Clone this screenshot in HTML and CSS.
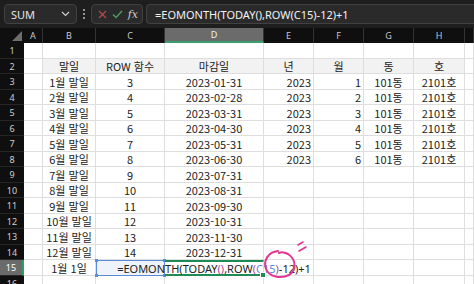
FILE: index.html
```html
<!DOCTYPE html>
<html lang="ko">
  <head>
    <meta charset="UTF-8" />
    <meta name="viewport" content="width=device-width, initial-scale=1.0" />
    <title>EOMONTH</title>
    <link rel="stylesheet" href="styles.css">
  </head>
  <body>
    <!-- Formula bar -->
    <div class="toolbar">
      <div class="namebox">
        <span>SUM</span>
        <svg width="9" height="6" viewBox="0 0 9 6"><polyline points="1,1 4.5,4.5 8,1" fill="none" stroke="#cfcfcf" stroke-width="1.2"/></svg>
      </div>
      <svg class="dots" width="4" height="12" viewBox="0 0 4 12"><circle cx="2" cy="2" r="1" fill="#bbb"/><circle cx="2" cy="6" r="1" fill="#bbb"/><circle cx="2" cy="10" r="1" fill="#bbb"/></svg>
      <div class="fnbox">
        <svg width="9" height="9" viewBox="0 0 9 9"><path d="M1 1 L8 8 M8 1 L1 8" stroke="#b24a4a" stroke-width="1.3"/></svg>
        <svg width="11" height="9" viewBox="0 0 11 9"><polyline points="1,4.5 4,7.5 10,1" fill="none" stroke="#4f9e63" stroke-width="1.4"/></svg>
        <span class="fx">fx</span>
      </div>
      <div class="formula">=EOMONTH(TODAY(),ROW(C15)-12)+1</div>
    </div>

    <!-- Sheet grid -->
    <div class="sheet">
      <div class="row head">
        <div class="rh corner"><span class="tri"></span></div>
        <div class="ch">A</div><div class="ch">B</div><div class="ch">C</div><div class="ch sel">D</div><div class="ch">E</div><div class="ch">F</div><div class="ch">G</div><div class="ch">H</div><div class="ch"></div>
      </div>
      <div class="row tall">
        <div class="rh">1</div>
        <div class="c"></div><div class="c"></div><div class="c"></div><div class="c"></div><div class="c"></div><div class="c"></div><div class="c"></div><div class="c"></div><div class="c"></div>
      </div>
      <div class="row">
        <div class="rh">2</div>
        <div class="c"></div><div class="c hd">말일</div><div class="c hd">ROW 함수</div><div class="c hd">마감일</div><div class="c hd">년</div><div class="c hd">월</div><div class="c hd">동</div><div class="c hd">호</div><div class="c"></div>
      </div>
      <div class="row tall">
        <div class="rh">3</div>
        <div class="c"></div><div class="c m">1월 말일</div><div class="c m">3</div><div class="c m">2023-01-31</div><div class="c r">2023</div><div class="c r">1</div><div class="c m">101동</div><div class="c m">2101호</div><div class="c"></div>
      </div>
      <div class="row">
        <div class="rh">4</div>
        <div class="c"></div><div class="c m">2월 말일</div><div class="c m">4</div><div class="c m">2023-02-28</div><div class="c r">2023</div><div class="c r">2</div><div class="c m">101동</div><div class="c m">2101호</div><div class="c"></div>
      </div>
      <div class="row tall">
        <div class="rh">5</div>
        <div class="c"></div><div class="c m">3월 말일</div><div class="c m">5</div><div class="c m">2023-03-31</div><div class="c r">2023</div><div class="c r">3</div><div class="c m">101동</div><div class="c m">2101호</div><div class="c"></div>
      </div>
      <div class="row">
        <div class="rh">6</div>
        <div class="c"></div><div class="c m">4월 말일</div><div class="c m">6</div><div class="c m">2023-04-30</div><div class="c r">2023</div><div class="c r">4</div><div class="c m">101동</div><div class="c m">2101호</div><div class="c"></div>
      </div>
      <div class="row tall">
        <div class="rh">7</div>
        <div class="c"></div><div class="c m">5월 말일</div><div class="c m">7</div><div class="c m">2023-05-31</div><div class="c r">2023</div><div class="c r">5</div><div class="c m">101동</div><div class="c m">2101호</div><div class="c"></div>
      </div>
      <div class="row">
        <div class="rh">8</div>
        <div class="c"></div><div class="c m">6월 말일</div><div class="c m">8</div><div class="c m">2023-06-30</div><div class="c r">2023</div><div class="c r">6</div><div class="c m">101동</div><div class="c m">2101호</div><div class="c"></div>
      </div>
      <div class="row tall">
        <div class="rh">9</div>
        <div class="c"></div><div class="c m">7월 말일</div><div class="c m">9</div><div class="c m">2023-07-31</div><div class="c"></div><div class="c"></div><div class="c"></div><div class="c"></div><div class="c"></div>
      </div>
      <div class="row">
        <div class="rh">10</div>
        <div class="c"></div><div class="c m">8월 말일</div><div class="c m">10</div><div class="c m">2023-08-31</div><div class="c"></div><div class="c"></div><div class="c"></div><div class="c"></div><div class="c"></div>
      </div>
      <div class="row tall">
        <div class="rh">11</div>
        <div class="c"></div><div class="c m">9월 말일</div><div class="c m">11</div><div class="c m">2023-09-30</div><div class="c"></div><div class="c"></div><div class="c"></div><div class="c"></div><div class="c"></div>
      </div>
      <div class="row">
        <div class="rh">12</div>
        <div class="c"></div><div class="c m">10월 말일</div><div class="c m">12</div><div class="c m">2023-10-31</div><div class="c"></div><div class="c"></div><div class="c"></div><div class="c"></div><div class="c"></div>
      </div>
      <div class="row tall">
        <div class="rh">13</div>
        <div class="c"></div><div class="c m">11월 말일</div><div class="c m">13</div><div class="c m">2023-11-30</div><div class="c"></div><div class="c"></div><div class="c"></div><div class="c"></div><div class="c"></div>
      </div>
      <div class="row">
        <div class="rh">14</div>
        <div class="c"></div><div class="c m">12월 말일</div><div class="c m">14</div><div class="c m">2023-12-31</div><div class="c"></div><div class="c"></div><div class="c"></div><div class="c"></div><div class="c"></div>
      </div>
      <div class="row tall">
        <div class="rh sel">15</div>
        <div class="c"></div><div class="c m">1월 1일</div>
        <div class="c ref"><i class="h tl"></i><i class="h tr"></i><i class="h bl"></i><i class="h br"></i></div>
        <div class="c active">
          <span class="edit">=EOMONTH(TODAY<span class="pk">()</span>,ROW<span class="pk">(</span><span class="bl">C15</span><span class="pk">)</span>-12)+1</span>
          <i class="fill"></i>
        </div>
        <div class="c"></div><div class="c"></div><div class="c"></div><div class="c"></div><div class="c"></div>
      </div>
      <div class="row tall">
        <div class="rh">16</div>
        <div class="c"></div><div class="c"></div><div class="c"></div><div class="c"></div><div class="c"></div><div class="c"></div><div class="c"></div><div class="c"></div><div class="c"></div>
      </div>

      <!-- hand drawn marker -->
      <svg class="mark" width="60" height="45" viewBox="0 0 60 45">
        <path d="M24 12 C14 13 9 22 12 30 C15 38 27 40 35 36 C43 31 42 20 34 15 C30 13 27 13 25 14" fill="none" stroke="#e2358f" stroke-width="2" stroke-linecap="round"/>
        <path d="M44 6 L49 3 M45 12 L52 8" fill="none" stroke="#e2358f" stroke-width="1.6" stroke-linecap="round"/>
      </svg>
    </div>
  </body>
</html>
```

FILE: styles.css
```css
/* Excel sheet, dark UI */
body {
  margin: 0;
  width: 474px;
  height: 284px;
  overflow: hidden;
  background-color: #1e1e1e;
  font-family: "Noto Sans CJK KR", "Noto Sans", sans-serif;
}

/* Formula bar */
.toolbar {
  height: 28px;
  box-sizing: border-box;
  padding: 4px 0 4px 4px;
  display: flex;
  align-items: stretch;
  background-color: #1e1e1e;
}

.namebox {
  width: 73px;
  box-sizing: border-box;
  padding: 0 6px 0 6px;
  display: flex;
  align-items: center;
  justify-content: space-between;
  border: 1px solid #414141;
  border-radius: 4px;
  background-color: #2a2a2a;
  color: #e6e6e6;
  font-family: "Noto Sans", sans-serif;
  font-size: 11px;
}

.dots {
  align-self: center;
  margin: 0 5px 0 5px;
}

.fnbox {
  width: 52px;
  box-sizing: border-box;
  padding: 0 4px 0 6px;
  display: flex;
  align-items: center;
  justify-content: space-between;
  border: 1px solid #414141;
  border-radius: 4px;
  background-color: #2a2a2a;
}

.fx {
  color: #cfcfcf;
  font-family: "DejaVu Serif", serif;
  font-style: italic;
  font-size: 11px;
}

.formula {
  flex: 1;
  margin-left: 3px;
  padding-left: 8px;
  display: flex;
  align-items: center;
  border: 1px solid #414141;
  border-right: none;
  border-radius: 4px 0 0 4px;
  background-color: #2a2a2a;
  color: #f2f2f2;
  font-family: "Noto Sans", sans-serif;
  font-size: 11px;
  white-space: nowrap;
}

/* Sheet */
.sheet {
  position: relative;
  background-color: #fff;
}

.row {
  display: grid;
  grid-template-columns: 24px 19px 53px 69px 99px 50px 50px 50px 51px 1fr;
  height: 15px;
}

.row.tall {
  height: 16px;
}

.row.head {
  height: 15px;
  background-color: #0f0f0f;
}

.rh {
  display: flex;
  align-items: center;
  justify-content: center;
  background-color: #0f0f0f;
  border-bottom: 1px solid #262626;
  color: #cfcfcf;
  font-family: "Noto Sans", sans-serif;
  font-size: 9px;
  box-sizing: border-box;
}

.rh.sel {
  background-color: #6b6b6b;
  border-right: 2px solid #2f9e63;
  color: #fff;
}

.corner {
  position: relative;
  border-bottom: none;
}

.tri {
  position: absolute;
  right: 2px;
  bottom: 2px;
  width: 0;
  height: 0;
  border-left: 10px solid transparent;
  border-bottom: 10px solid #6d6d6d;
}

.ch {
  display: flex;
  align-items: center;
  justify-content: center;
  box-sizing: border-box;
  border-right: 1px solid #333;
  color: #c9c9c9;
  font-family: "Noto Sans", sans-serif;
  font-size: 9px;
}

.ch.sel {
  background-color: #6b6b6b;
  border-bottom: 2px solid #3a9f6e;
  color: #f0f0f0;
}

.c {
  box-sizing: border-box;
  padding: 0 2px;
  display: flex;
  align-items: center;
  border-right: 1px solid #dedede;
  border-bottom: 1px solid #dedede;
  color: #222;
  font-size: 11px;
  white-space: nowrap;
  overflow: hidden;
}

.c.m,
.c.hd {
  justify-content: center;
}

.c.hd {
  background-color: #f2f2f2;
}

.c.r {
  justify-content: flex-end;
}

/* C15 reference box */
.c.ref {
  position: relative;
  overflow: visible;
  background-color: #edf2fb;
  border: 1px solid #5b8ad8;
}

.h {
  position: absolute;
  width: 3px;
  height: 3px;
  background-color: #5b8ad8;
}

.h.tl { left: -2px; top: -2px; }
.h.tr { right: -2px; top: -2px; }
.h.bl { left: -2px; bottom: -2px; }
.h.br { right: -2px; bottom: -2px; }

/* D15 active cell in edit mode */
.c.active {
  position: relative;
  overflow: visible;
  justify-content: center;
  border-top: 2px solid #1f8a53;
  border-bottom: 2px solid #1f8a53;
  z-index: 2;
}

.edit {
  position: absolute;
  left: 50%;
  top: 0;
  transform: translateX(-50%);
  line-height: 13px;
  color: #222;
  font-family: "Noto Sans", sans-serif;
  font-size: 11px;
}

.pk { color: #b8428f; }
.bl { color: #5b8ad8; }

.fill {
  position: absolute;
  right: -3px;
  bottom: -4px;
  width: 4px;
  height: 4px;
  background-color: #1f8a53;
  border: 1px solid #fff;
}

.mark {
  position: absolute;
  left: 254px;
  top: 211px;
  z-index: 3;
}
```
